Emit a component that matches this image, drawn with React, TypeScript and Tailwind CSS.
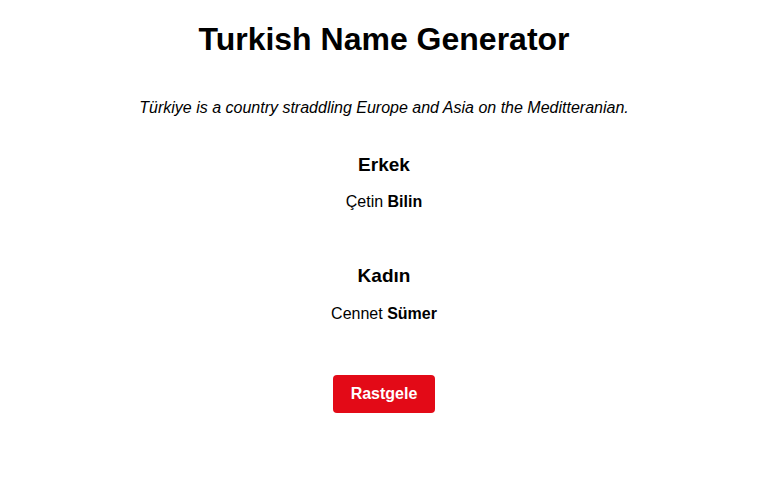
import React, { useState } from 'react';

type Gender = 'erkek' | 'kadin';

const names: Record<Gender, string[]> = {
  erkek: ['Çetin', 'Emre', 'Burak', 'Mehmet', 'Kaan'],
  kadin: ['Cennet', 'Elif', 'Zeynep', 'Ayşe', 'Defne'],
};
const surnames = ['Bilin', 'Sümer', 'Yılmaz', 'Demir', 'Kaya', 'Şahin'];

const pick = (list: string[]) => list[Math.floor(Math.random() * list.length)];

const App: React.FC = () => {
  const [male, setMale] = useState({ first: 'Çetin', last: 'Bilin' });
  const [female, setFemale] = useState({ first: 'Cennet', last: 'Sümer' });

  const shuffle = () => {
    setMale({ first: pick(names.erkek), last: pick(surnames) });
    setFemale({ first: pick(names.kadin), last: pick(surnames) });
  };

  return (
    <div className="min-h-screen bg-white text-black font-['Liberation_Sans',Arial,sans-serif] text-center">
      <h1 className="pt-[21px] text-[32px] leading-[37px] font-bold">Turkish Name Generator</h1>
      <p className="mt-[41px] text-base leading-[18px] italic">
        Türkiye is a country straddling Europe and Asia on the Meditteranian.
      </p>

      <section className="mt-[37px]">
        <h3 className="text-[19px] leading-[22px] font-bold">Erkek</h3>
        <p className="mt-[17px] text-base leading-[18px]">
          {male.first} <span className="font-bold">{male.last}</span>
        </p>
      </section>

      <section className="mt-[54px]">
        <h3 className="text-[19px] leading-[22px] font-bold">Kadın</h3>
        <p className="mt-[18px] text-base leading-[18px]">
          {female.first} <span className="font-bold">{female.last}</span>
        </p>
      </section>

      <button
        onClick={shuffle}
        className="mt-[52px] h-[38px] px-[18px] rounded-[4px] bg-[#e30a17] text-white text-base font-bold"
      >
        Rastgele
      </button>
    </div>
  );
};

export default App;
